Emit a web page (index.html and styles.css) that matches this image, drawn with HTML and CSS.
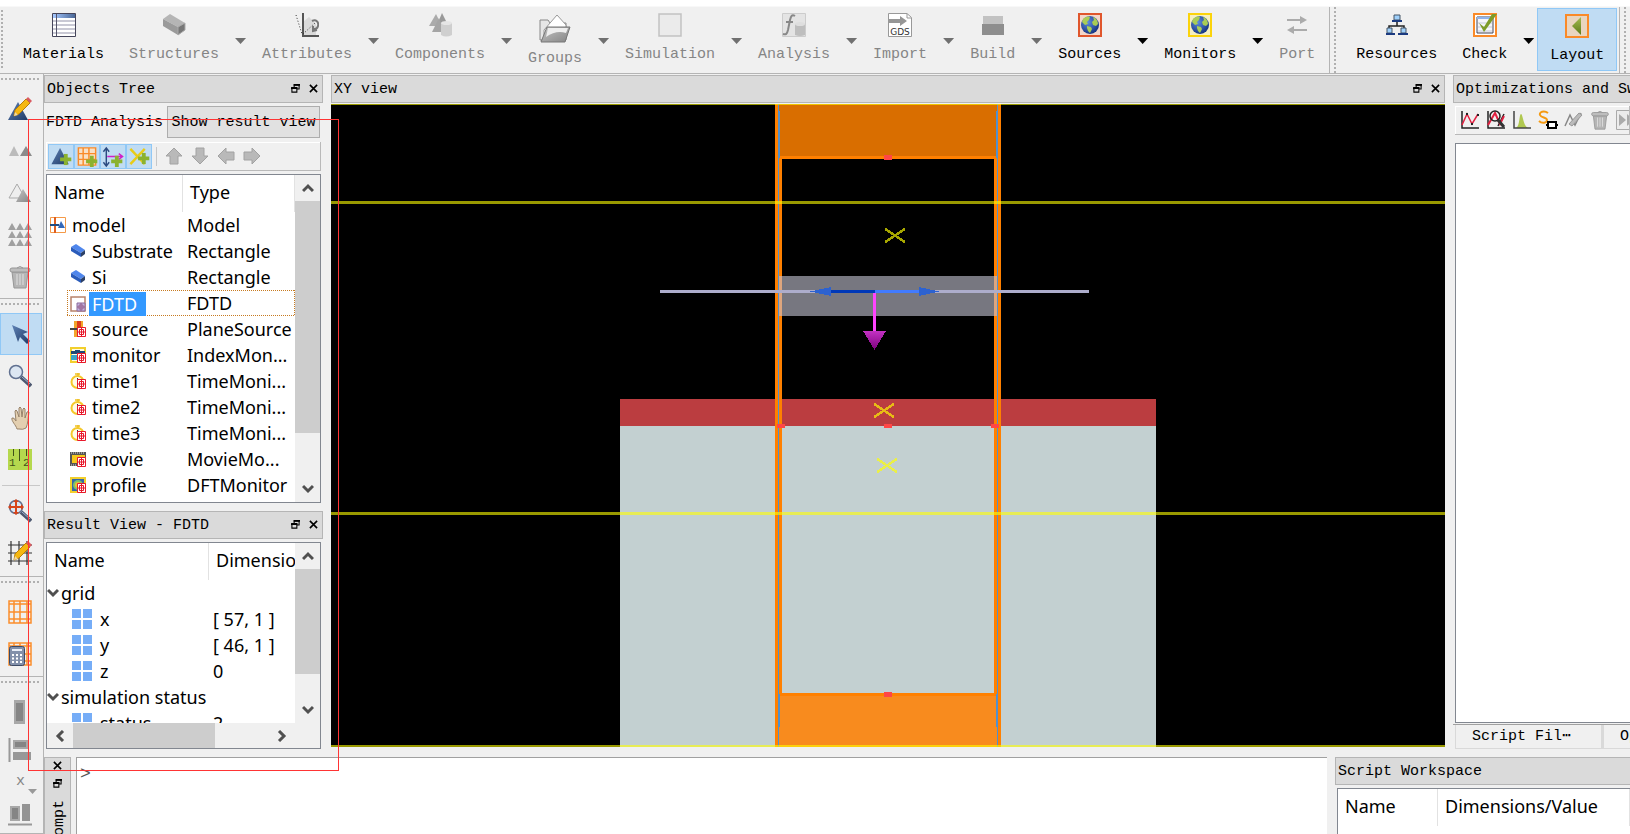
FILE: index.html
```html
<!DOCTYPE html>
<html lang="en">
<head>
<meta charset="utf-8">
<title>FDTD Layout Editor</title>
<link rel="stylesheet" href="styles.css">
</head>
<body>
<svg class="defs" aria-hidden="true">
  <defs>
    <linearGradient id="gGray" x1="0" y1="0" x2="1" y2="1"><stop offset="0" stop-color="#c4c4c4"/><stop offset="1" stop-color="#858585"/></linearGradient>
    <linearGradient id="gNavy" x1="0" y1="0" x2="1" y2="1"><stop offset="0" stop-color="#5f82b5"/><stop offset="1" stop-color="#1f3a66"/></linearGradient>
    <linearGradient id="gHead" x1="0" y1="0" x2="1" y2="0"><stop offset="0" stop-color="#a5c8ff"/><stop offset="1" stop-color="#4a6796"/></linearGradient>
    <radialGradient id="gSea" cx=".4" cy=".35" r=".7"><stop offset="0" stop-color="#5d8be0"/><stop offset="1" stop-color="#12307c"/></radialGradient>
    <linearGradient id="gGreen" x1="0" y1="0" x2="0" y2="1"><stop offset="0" stop-color="#a4bb50"/><stop offset="1" stop-color="#5d7a18"/></linearGradient>
    <linearGradient id="gMag" x1="0" y1="0" x2="0" y2="1"><stop offset="0" stop-color="#c332c3"/><stop offset="1" stop-color="#7d007d"/></linearGradient>
  </defs>
  <symbol id="globe" viewBox="0 0 24 24"><circle cx="12" cy="12" r="9" fill="url(#gSea)"/><path d="M5 6c2-2 5-3 7-2l-1 3-2 2 1 2-3 1-3-3zM9 13l4 1 1 2-2 4-2-2-1-3zM15 4c3 1 5 4 5 7l-2 2-3-1-1-3 2-2z" fill="#a9cc55"/></symbol>
  <symbol id="restore" viewBox="0 0 10 10"><path d="M3.5 3.500V1h5.500v4.500H6.500M1 4h5.500v5H1z" fill="none" stroke="#000" stroke-width="1.200"/><path d="M3 1h7M0 4.500h7" stroke="#000" stroke-width="2"/></symbol>
  <symbol id="close" viewBox="0 0 10 10"><path d="M1 1l8 8M9 1l-8 8" stroke="#000" stroke-width="1.800"/></symbol>
  <symbol id="plus" viewBox="0 0 12 12"><path d="M4 0h4v4h4v4H8v4H4V8H0V4h4z" fill="#8bb22f"/></symbol>
  <symbol id="block" viewBox="0 0 16 16"><path d="M1 4l5-3 9 6-4 3z" fill="#4f86ec"/><path d="M1 4l10 6v4L1 8z" fill="#2a5cbb"/><path d="M11 10l4-3v4l-4 3z" fill="#2b4066"/></symbol>
  <symbol id="tag" viewBox="0 0 16 16"><path d="M7.500 6.500h8v9h-8z" fill="#fff" stroke="#e8192c"/><path d="M9.500 8.500h4v5h-4zM11.500 7v8M8 11h7" fill="none" stroke="#e8192c"/></symbol>
  <symbol id="clock" viewBox="0 0 16 16"><path d="M8 0v3M5 1h5" stroke="#f0c020" stroke-width="1.500"/><circle cx="7.500" cy="9" r="6" fill="#fffbe8" stroke="#f5c82a" stroke-width="2"/><path d="M7.500 5v4" stroke="#333"/><use href="#tag" width="16" height="16"/></symbol>
  <symbol id="quad" viewBox="0 0 20 20"><path d="M0 0h9v9H0zM11 0h9v9h-9zM0 11h9v9H0zM11 11h9v9h-9z" fill="#76adf7"/></symbol>
  <symbol id="up" viewBox="0 0 12 10"><path d="M1 8l5-5 5 5" fill="none" stroke="#505050" stroke-width="3"/></symbol>
  <symbol id="down" viewBox="0 0 12 10"><path d="M1 2l5 5 5-5" fill="none" stroke="#505050" stroke-width="3"/></symbol>
  <symbol id="arrowUp" viewBox="0 0 18 18"><path d="M9 1l8 8h-4v8H5V9H1z" fill="#b9b9b9" stroke="#a2a2a2"/></symbol>
  <symbol id="trash" viewBox="0 0 24 24"><path d="M4 7h16l-2 16H6z" fill="#b5b5b5" stroke="#969696"/><path d="M9 9v11M12 9v11M15 9v11" stroke="#e0e0e0"/><rect x="2" y="3" width="20" height="4" rx="2" fill="#bdbdbd" stroke="#969696"/><path d="M9 3q3-3 6 0" fill="none" stroke="#969696"/></symbol>
  <symbol id="pencil" viewBox="0 0 24 24"><path d="M7 13L18 2l4 4-11 11-5 2z" fill="#f5b710" stroke="#b87d08"/><path d="M18 2l2-2 4 4-2 2z" fill="#d95b61"/><path d="M6 19l1-4 3 3z" fill="#eed9a5"/></symbol>
  <symbol id="glass" viewBox="0 0 24 24"><path d="M13 13l10 9" stroke="#4d5870" stroke-width="4"/><path d="M14 13l8 7" stroke="#9db2cf"/><circle cx="8" cy="8" r="6.500" fill="#dce6f2" stroke="#607090" stroke-width="1.500"/></symbol>
  <symbol id="mesh" viewBox="0 0 24 24"><path d="M1 1h22v22H1zM6 1v22M12 1v22M19 1v22M1 4h22M1 12h22M1 19h22" fill="none" stroke="#fa8d2b" stroke-width="1.500"/></symbol>
</svg>

<div class="menubar"><span>g</span><span>p</span></div>

<header class="toolbar">
  <i class="grip"></i>
  <div class="group">
    <button class="tool"><svg viewBox="0 0 24 24"><path d="M.5.5h23v23H.5z" fill="#fff"/><path d="M1 1h22v4H1z" fill="url(#gHead)"/><path d="M1 8h22M1 12h22M1 16h22M1 20h22" stroke="#c9c9d4" stroke-width="2"/><path d="M4.500 1v22" stroke="#55556a"/><path d="M.5.5h23v23H.5z" fill="none" stroke="#45455a"/></svg>Materials</button>
    <button class="tool off"><svg viewBox="0 0 24 24"><path d="M1 6l7-5 15 9-7 4z" fill="#b5b5b5"/><path d="M1 6l15 8v8L1 13z" fill="#9a9a9a"/><path d="M16 14l7-4v7l-7 5z" fill="#777" stroke="#aaa"/></svg>Structures</button><button class="drop off" aria-label="Structures menu"></button>
    <button class="tool off"><svg viewBox="0 0 24 24"><path d="M8 9l6-5 7 7v11H8z" fill="#dadada"/><path d="M8 0v23h16" fill="none" stroke="#555" stroke-width="2"/><path d="M1 2l6 19M8 21L20 10" stroke="#333" stroke-dasharray="1 2"/><path d="M17 8c4-2 7 1 6 5s-4 3-5 3m0-3v5l4-1" fill="none" stroke="#777" stroke-width="2"/></svg>Attributes</button><button class="drop off" aria-label="Attributes menu"></button>
    <button class="tool off"><svg viewBox="0 0 24 24"><path d="M8 1l6 12H1z" fill="#ababab"/><path d="M14 0l6 12H9z" fill="#999"/><path d="M11 5l5 14H4z" fill="#a5a5a5"/><path d="M13 10v12q5 3 11 0V10z" fill="#cfcfcf"/><ellipse cx="18.500" cy="10" rx="5.500" ry="2" fill="#e5e5e5"/></svg>Components</button><button class="drop off" aria-label="Components menu"></button>
    <button class="tool off"><svg class="big" viewBox="0 0 32 32"><path d="M1 7h8l2 3h16v17H1z" fill="#e6e6e6" stroke="#888"/><path d="M5 17L18 2l9 10v12H5z" fill="#fff" stroke="#999"/><path d="M8 14h23l-5 15H2z" fill="url(#gGray)" stroke="#777"/><path d="M9 15h20l-2 5q-10-3-20 4z" fill="#eee"/></svg>Groups</button><button class="drop off" aria-label="Groups menu"></button>
    <button class="tool off"><svg viewBox="0 0 24 24"><path d="M1 1h22v22H1z" fill="#ebebeb" stroke="#c2c2c2" stroke-width="1.500"/></svg>Simulation</button><button class="drop off" aria-label="Simulation menu"></button>
    <button class="tool off"><svg viewBox="0 0 24 24"><path d="M.5.5h23v23H.5z" fill="#e4e4e4" stroke="#ccc"/><path d="M13 3c-3-2-4 0-5 4L6 17c-1 4-2 5-5 4M4 9h7" fill="none" stroke="#888" stroke-width="2"/><path d="M13 11v11q5 2 10 0V11z" fill="#bebebe"/><ellipse cx="18" cy="11" rx="5" ry="2" fill="#dedede"/></svg>Analysis</button><button class="drop off" aria-label="Analysis menu"></button>
    <button class="tool off"><svg viewBox="0 0 24 24"><path d="M.5.5H19l4.500 4v19H.5z" fill="#fff" stroke="#999"/><path d="M19 1v4h4" fill="none" stroke="#999"/><path d="M1 6h11V3l7 5-7 5v-3H1z" fill="#969696"/><text x="12" y="22" text-anchor="middle" class="gds">GDS</text></svg>Import</button><button class="drop off" aria-label="Import menu"></button>
    <button class="tool off"><svg viewBox="0 0 24 24"><path d="M2 3h20v8H2z" fill="#c2c2c2"/><path d="M1 11h22v11H1z" fill="#8e8e8e"/></svg>Build</button><button class="drop off" aria-label="Build menu"></button>
    <button class="tool"><svg viewBox="0 0 24 24"><path d="M1 1h22v22H1z" fill="#f3d7ca" stroke="#e0562c" stroke-width="2"/><use href="#globe" width="24" height="24"/></svg>Sources</button><button class="drop" aria-label="Sources menu"></button>
    <button class="tool"><svg viewBox="0 0 24 24"><path d="M1 1h22v22H1z" fill="#f6efbf" stroke="#fbd30b" stroke-width="2"/><use href="#globe" width="24" height="24"/></svg>Monitors</button><button class="drop" aria-label="Monitors menu"></button>
    <button class="tool off"><svg viewBox="0 0 24 24"><path d="M2 6h13V3l7 4-7 4V8H2zM22 16H9v-3l-7 4 7 4v-3h13z" fill="#ababab"/></svg>Port</button>
  </div>
  <i class="grip split"></i>
  <div class="group">
    <button class="tool"><svg viewBox="0 0 24 24"><path d="M12 9v4M4 17v-4h15v4" fill="none" stroke="#222" stroke-width="1.500"/><path d="M9 2h6v5H9zM2 15h5v5H2zM16 15h5v5h-5z" fill="#9fd0fb" stroke="#456"/><path d="M7 8h10M1 21h9M13 21h10" stroke="#1b3a80" stroke-width="2"/></svg>Resources</button>
    <button class="tool"><svg viewBox="0 0 24 24"><path d="M1 1h22v22H1z" fill="#fff" stroke="#fa8a28" stroke-width="2"/><path d="M4 4h16v16H4z" fill="#f5f5fa" stroke="#445"/><path d="M4 5h16" stroke="#8fb4ec" stroke-width="2"/><path d="M5 10h14M5 14h14M5 18h14" stroke="#c5cbd8"/><path d="M6 10l5 4 8-13 5 0-13 18z" fill="#7d9c2a"/></svg>Check</button><button class="drop" aria-label="Check menu"></button>
    <button class="tool on"><svg viewBox="0 0 24 24"><path d="M1 1h22v22H1z" fill="#e9d5bf" stroke="#fa8a28" stroke-width="2"/><path d="M16 3v18L7 12z" fill="url(#gGreen)"/></svg>Layout</button>
  </div>
  <i class="grip split"></i>
</header>

<div class="body">
  <nav class="side">
    <section>
      <i class="dots"></i>
      <button aria-label="Edit"><svg viewBox="0 0 24 24"><path d="M10 5l10 18H0z" fill="url(#gNavy)"/><use href="#pencil" width="24" height="24"/></svg></button>
      <button aria-label="Duplicate"><svg viewBox="0 0 24 24"><path d="M6 7l5 10H1z" fill="#bbb"/><path d="M18 7l6 10H12z" fill="#8c8c8c"/></svg></button>
      <button aria-label="Copy"><svg viewBox="0 0 24 24"><path d="M9 3l8 14H1z" fill="#eee" stroke="#aaa"/><path d="M15 8l8 13H8z" fill="url(#gGray)"/></svg></button>
      <button aria-label="Array"><svg viewBox="0 0 24 24"><path d="M4 0l4 7H0zM12 0l4 7H8zM20 0l4 7h-8zM4 8l4 7H0zM12 8l4 7H8zM20 8l4 7h-8zM4 16l4 7H0zM12 16l4 7H8zM20 16l4 7h-8z" fill="#a0a0a0"/></svg></button>
      <button aria-label="Delete"><svg viewBox="0 0 24 24"><use href="#trash" width="24" height="24"/></svg></button>
    </section>
    <section class="pointer">
      <i class="dots"></i>
      <button class="on" aria-label="Select"><svg viewBox="0 0 24 24"><path d="M4 3l16 7-5 2 7 7-3 3-7-7-2 5z" fill="url(#gNavy)"/></svg></button>
      <button aria-label="Zoom"><svg viewBox="0 0 24 24"><use href="#glass" width="24" height="24"/></svg></button>
      <button aria-label="Pan"><svg viewBox="0 0 24 24"><path d="M9 23C8 19 3 15 4 12q2-1 4 3L7 5q1-2 2 0l2 6V2q1-2 2 0l1 9 1-8q1-2 2 0v9l2-6q2-1 2 0c-1 6-1 12-3 16q-3 2-7 1z" fill="#e3cfb0" stroke="#98836a"/></svg></button>
      <button aria-label="Ruler"><svg viewBox="0 0 24 24"><path d="M0 1h24v21H0z" fill="#b5d84e"/><path d="M5.500 1v7M11.500 1v12M18.500 1v7" stroke="#40521a"/><text x="1" y="18" class="digits">1</text><text x="15" y="18" class="digits">2</text></svg></button>
      <hr>
      <button aria-label="Zoom extent"><svg viewBox="0 0 24 24"><use href="#glass" width="24" height="24"/><path d="M8 0l3 3H9v4h4V5l3 3-3 3V9H9v4h2l-3 3-3-3h2V9H3v2L0 8l3-3v2h4V3H5z" fill="#d8451a"/></svg></button>
      <button aria-label="Edit grid"><svg viewBox="0 0 24 24"><path d="M3 0v24M11 0v24M19 0v24M0 4h24M0 12h24M0 20h24" stroke="#333" stroke-width="1.200"/><use href="#pencil" width="24" height="24"/></svg></button>
    </section>
    <section class="meshing">
      <i class="dots"></i>
      <button aria-label="Mesh"><svg viewBox="0 0 24 24"><use href="#mesh" width="24" height="24"/></svg></button>
      <button aria-label="Compute mesh"><svg viewBox="0 0 24 24"><use href="#mesh" width="24" height="24"/><rect x="1.500" y="4.500" width="15" height="19" rx="2" fill="#8290aa" stroke="#3c4a66"/><path d="M4 8h10" stroke="#e8eef8" stroke-width="2"/><path d="M4 13h10M4 16.500h10M4 20h10" stroke="#fff" stroke-width="2" stroke-dasharray="2 2"/></svg></button>
    </section>
    <section class="tight">
      <i class="dots"></i>
      <button aria-label="Align"><svg viewBox="0 0 24 24"><path d="M6 0h11v24H6z" fill="#a8a8a8"/><path d="M8 3h7v18H8z" fill="#858585"/></svg></button>
      <button aria-label="Align left"><svg viewBox="0 0 24 24"><path d="M1.500 0v24" stroke="#999" stroke-width="2"/><path d="M5 2h15v9H5z" fill="#a8a8a8"/><path d="M7 4h11v5H7z" fill="#858585"/><path d="M5 14h18v8H5z" fill="#989898"/></svg></button>
      <button class="axis">x</button>
      <button aria-label="Align bottom"><svg viewBox="0 0 24 24"><path d="M2 4h10v15H2z" fill="#a8a8a8"/><path d="M4 6h6v11H4z" fill="#858585"/><path d="M14 2h8v17h-8z" fill="#949494"/><path d="M0 22.500h24" stroke="#999" stroke-width="2"/></svg></button>
    </section>
  </nav>

  <div class="work">
    <main class="upper">
      <div class="dock left">
        <section class="panel objects">
          <h2 class="bar">Objects Tree<span class="ctl"><button aria-label="Float"><svg><use href="#restore"/></svg></button><button aria-label="Close"><svg><use href="#close"/></svg></button></span></h2>
          <div class="analysis"><span>FDTD Analysis</span><button>Show result view</button></div>
          <div class="mini">
            <button class="on" aria-label="Show structures"><svg viewBox="0 0 24 24"><path d="M11 3l9 17H2z" fill="url(#gNavy)"/><use href="#plus" x="11" y="9" width="12" height="12"/></svg></button><button class="on" aria-label="Show simulation"><svg viewBox="0 0 24 24"><path d="M3 3h18v18H3zM8 3v18M14 3v18M3 9h18M3 15h18" fill="#f8e0c6" stroke="#fa8a28" stroke-width="1.500"/><use href="#plus" x="11" y="11" width="12" height="12"/></svg></button><button class="on" aria-label="Show sources"><svg viewBox="0 0 24 24"><path d="M5 4v17M2 7l3-4 3 4M2 18l3 4 3-4" fill="none" stroke="#2b4a80" stroke-width="1.500"/><path d="M6 12h16m-4-3l4 3-4 3" fill="none" stroke="#d020c8" stroke-width="1.500"/><use href="#plus" x="10" y="11" width="12" height="12"/></svg></button><button class="on" aria-label="Show monitors"><svg viewBox="0 0 24 24"><path d="M3 4l15 16M3 20L18 4" stroke="#e8cc18" stroke-width="2.500"/><use href="#plus" x="11" y="8" width="12" height="12"/></svg></button><i></i><button aria-label="Up"><svg viewBox="0 0 18 18"><use href="#arrowUp"/></svg></button><button aria-label="Down"><svg viewBox="0 0 18 18"><g transform="rotate(180 9 9)"><use href="#arrowUp"/></g></svg></button><button aria-label="Left"><svg viewBox="0 0 18 18"><g transform="rotate(-90 9 9)"><use href="#arrowUp"/></g></svg></button><button aria-label="Right"><svg viewBox="0 0 18 18"><g transform="rotate(90 9 9)"><use href="#arrowUp"/></g></svg></button>
          </div>
          <div class="frame">
            <div class="view">
              <table class="tree">
                <colgroup><col class="c-name"><col></colgroup>
                <thead><tr><th>Name</th><th>Type</th></tr></thead>
                <tbody>
                  <tr><td><svg viewBox="0 0 16 16"><path d="M.5.5h15v15H.5z" fill="#fff" stroke="#f59a48"/><path d="M5 0v16" stroke="#e06020" stroke-width="2"/><path d="M0 8h9" stroke="#234c80" stroke-width="2"/><path d="M11 4l4 7H8z" fill="#3468b8"/></svg><span>model</span></td><td>Model</td></tr>
                  <tr class="kid"><td><svg><use href="#block"/></svg><span>Substrate</span></td><td>Rectangle</td></tr>
                  <tr class="kid"><td><svg><use href="#block"/></svg><span>Si</span></td><td>Rectangle</td></tr>
                  <tr class="kid picked"><td><svg viewBox="0 0 16 16"><path d="M1 1h14v14H1z" fill="#fff" stroke="#b8836a" stroke-width="1.500"/><path d="M7 7h8v8H7z" fill="#c5b5df" stroke="#8a6b9a"/><path d="M9 9h4v4H9zM11 7v8M7 11h8" fill="none" stroke="#8a4b7a" stroke-width=".7"/></svg><span>FDTD</span></td><td>FDTD</td></tr>
                  <tr class="kid"><td><svg viewBox="0 0 16 16"><path d="M4 0h9v16H4z" fill="#f2a52c"/><path d="M7 0h4v16H7z" fill="#dd3c1c"/><path d="M0 8h9" stroke="#444" stroke-width="2"/><use href="#tag" width="16" height="16"/></svg><span>source</span></td><td>PlaneSource</td></tr>
                  <tr class="kid"><td><svg viewBox="0 0 16 16"><path d="M1 1h14v14H1z" fill="#fffbe0" stroke="#f2cf2c" stroke-width="2"/><path d="M1 4h14v3H1z" fill="#1d4876"/><path d="M1 8h14v5H1z" fill="#38a4c8"/><path d="M5 3h5v3H5z" fill="#1d4876"/><use href="#tag" width="16" height="16"/></svg><span>monitor</span></td><td>IndexMon...</td></tr>
                  <tr class="kid"><td><svg><use href="#clock"/></svg><span>time1</span></td><td>TimeMoni...</td></tr>
                  <tr class="kid"><td><svg><use href="#clock"/></svg><span>time2</span></td><td>TimeMoni...</td></tr>
                  <tr class="kid"><td><svg><use href="#clock"/></svg><span>time3</span></td><td>TimeMoni...</td></tr>
                  <tr class="kid"><td><svg viewBox="0 0 16 16"><path d="M0 1h16v14H0z" fill="#555"/><path d="M1 2h14M1 14h14" stroke="#ddd" stroke-dasharray="1 1"/><path d="M2 4h13v8H2z" fill="#f5c91c"/><use href="#tag" width="16" height="16"/></svg><span>movie</span></td><td>MovieMo...</td></tr>
                  <tr class="kid"><td><svg viewBox="0 0 16 16"><path d="M1 1h14v14H1z" fill="#3566a8" stroke="#f2cf2c" stroke-width="2"/><circle cx="8" cy="8" r="5" fill="#7cc36a"/><circle cx="8" cy="8" r="3" fill="#f0bc30"/><use href="#tag" width="16" height="16"/></svg><span>profile</span></td><td>DFTMonitor</td></tr>
                </tbody>
              </table>
            </div>
            <div class="vscroll"><button aria-label="Scroll up"><svg><use href="#up"/></svg></button><i class="long"></i><button aria-label="Scroll down"><svg><use href="#down"/></svg></button></div>
          </div>
        </section>
        <section class="panel results">
          <h2 class="bar">Result View - FDTD<span class="ctl"><button aria-label="Float"><svg><use href="#restore"/></svg></button><button aria-label="Close"><svg><use href="#close"/></svg></button></span></h2>
          <div class="frame">
            <div class="stack">
              <div class="view">
                <table class="tree result">
                  <colgroup><col class="c-name"><col></colgroup>
                  <thead><tr><th>Name</th><th>Dimensions</th></tr></thead>
                  <tbody>
                    <tr class="node"><td colspan="2"><svg><use href="#down"/></svg><span>grid</span></td></tr>
                    <tr class="leaf"><td><svg><use href="#quad"/></svg><span>x</span></td><td>[ 57, 1 ]</td></tr>
                    <tr class="leaf"><td><svg><use href="#quad"/></svg><span>y</span></td><td>[ 46, 1 ]</td></tr>
                    <tr class="leaf"><td><svg><use href="#quad"/></svg><span>z</span></td><td>0</td></tr>
                    <tr class="node"><td colspan="2"><svg><use href="#down"/></svg><span>simulation status</span></td></tr>
                    <tr class="leaf"><td><svg><use href="#quad"/></svg><span>status</span></td><td>2</td></tr>
                  </tbody>
                </table>
              </div>
              <div class="hscroll"><button aria-label="Scroll left"><svg class="quarter"><use href="#down"/></svg></button><i></i><button aria-label="Scroll right"><svg class="quarter"><use href="#up"/></svg></button></div>
            </div>
            <div class="vscroll short"><button aria-label="Scroll up"><svg><use href="#up"/></svg></button><i></i><button aria-label="Scroll down"><svg><use href="#down"/></svg></button></div>
          </div>
        </section>
      </div>

      <section class="panel xy">
        <h2 class="bar">XY view<span class="ctl"><button aria-label="Float"><svg><use href="#restore"/></svg></button><button aria-label="Close"><svg><use href="#close"/></svg></button></span></h2>
        <svg class="scene" viewBox="331 104 1114 643" preserveAspectRatio="xMidYMid slice" shape-rendering="crispEdges">
          <path d="M331 104h1114v643H331z" fill="#000"/>
          <path d="M620 426h536v321H620z" fill="#c3d0d1"/>
          <path d="M620 399h536v27H620z" fill="#bb3d40"/>
          <path d="M779 104h218v53H779z" fill="#d96e00"/>
          <path d="M779 695h218v52H779z" fill="#f88b1e"/>
          <path d="M775 104h3v643h-3zM998 104h3v643h-3zM779 157h3v538h-3zM994 157h3v538h-3zM779 156h218v3H779zM779 693h218v3H779z" fill="#ff8000"/>
          <path d="M778 104h1v643h-1zM997 104h1v643h-1zM779 111h1v47h-1zM996 111h1v47h-1zM779 694h1v33h-1zM996 694h1v33h-1z" fill="#5290cc"/>
          <path d="M779 276h218v40H779z" fill="#777780"/>
          <path d="M779 276h3v40h-3zM994 276h3v40h-3z" fill="#dea67e"/>
          <path d="M660 290h429v3H660z" fill="#adadcc"/>
          <path d="M831 290h44v3h-44z" fill="#0038b8"/><path d="M875 290h44v3h-44z" fill="#427bff"/>
          <path d="M810 291.500l21-4.500v9zM939 291.500l-20-4.500v9z" fill="#2d62d0"/>
          <path d="M873 293h3v38h-3z" fill="#ff44ff"/><path d="M863 331h23l-11.500 19z" fill="url(#gMag)"/>
          <g fill="#ff0" fill-opacity=".6"><path d="M331 104h1114v1H331zM331 201h1114v3H331zM331 512h1114v3H331zM331 745h1114v2H331z"/></g>
          <path d="M885 229l20 13m0-13l-20 13M874 404l20 13m0-13l-20 13M877 459l20 13m0-13l-20 13" fill="none" stroke="#ff0" stroke-opacity=".65" stroke-width="2.500"/>
          <path d="M884 155h8v5h-8zM777 424h8v4h-8zM884 424h8v4h-8zM991 424h8v4h-8zM884 692h8v5h-8z" fill="#ff4646"/>
        </svg>
      </section>

      <section class="panel opt">
        <h2 class="bar">Optimizations and Sweeps</h2>
        <div class="mini plain">
          <button aria-label="New sweep"><svg viewBox="0 0 20 20"><path d="M2 1v17h17" fill="none" stroke="#222" stroke-width="1.500"/><path d="M2 15L7 4l5 10 6-10" fill="none" stroke="#e02040" stroke-width="1.500"/><path d="M6 3h2v2H6zM11 13h2v2h-2zM17 4h2v2h-2z" fill="#222"/></svg></button>
          <button aria-label="New optimization"><svg viewBox="0 0 20 20"><path d="M2 1v17h17M18 4l-6 12" fill="none" stroke="#222" stroke-width="1.500"/><path d="M2 15L9 3l5 11 4-8" fill="none" stroke="#e02040" stroke-width="2"/><circle cx="9" cy="6" r="5" fill="none" stroke="#222" stroke-width="1.500"/><path d="M12 10l6 7" stroke="#333" stroke-width="3"/></svg></button>
          <button aria-label="New yield analysis"><svg viewBox="0 0 20 20"><path d="M4 18c4-2 3-14 5-14s2 12 7 14z" fill="#b0c850"/><path d="M2 1v17h17" fill="none" stroke="#444" stroke-width="1.500"/></svg></button>
          <button aria-label="New S-parameter sweep"><svg viewBox="0 0 20 20"><path d="M10 3c-4-3-9-1-8 2s7 2 7 5-5 4-8 1" fill="none" stroke="#f59a12" stroke-width="2"/><path d="M10 12h8v6h-8zM8 15h2M18 15h2" fill="#fff" stroke="#000" stroke-width="2"/></svg></button>
          <button aria-label="Edit sweep"><svg viewBox="0 0 20 20"><path d="M1 16L6 5l5 10 6-12" fill="none" stroke="#888" stroke-width="1.500"/><path d="M5 14L15 3l3 2L8 16z" fill="#bbb" stroke="#999"/></svg></button>
          <button aria-label="Delete sweep"><svg viewBox="0 0 24 24"><use href="#trash" width="24" height="24"/></svg></button>
          <button aria-label="Run sweep"><svg viewBox="0 0 20 20"><path d="M.5.5h19v19H.5z" fill="#ececec" stroke="#aaa"/><path d="M3 4l7 6-7 6zM11 4l7 6-7 6z" fill="#aaa"/></svg></button>
        </div>
        <div class="frame"></div>
        <div class="tabs"><button>Script Fil⋯</button><button>Optimizations</button></div>
      </section>
    </main>

    <footer class="lower">
      <section class="prompt">
        <div class="vbar"><button aria-label="Close"><svg><use href="#close"/></svg></button><button aria-label="Float"><svg><use href="#restore"/></svg></button><span>Script Prompt</span></div>
        <textarea aria-label="Script Prompt">&gt;</textarea>
      </section>
      <section class="panel space">
        <h2 class="bar">Script Workspace</h2>
        <div class="frame"><div class="view"><table class="tree"><colgroup><col class="c-name"><col></colgroup><thead><tr><th>Name</th><th>Dimensions/Value</th></tr></thead></table></div></div>
      </section>
    </footer>
  </div>
  <div class="marquee"></div>
</div>
</body>
</html>
```
FILE: styles.css
```css
* { box-sizing: border-box; }

html, body { height: 100%; overflow: hidden; }

body {
  margin: 0;
  display: flex;
  flex-direction: column;
  background: #f0f0f0;
  color: #000;
  font: 15px/20px "Liberation Mono", monospace;
}

button {
  border: 0;
  padding: 0;
  margin: 0;
  background: none;
  color: inherit;
  font: inherit;
}

svg { display: block; flex: none; }
.defs { position: absolute; width: 0; height: 0; }
.gds { font: 9px "DejaVu Sans", sans-serif; fill: #333; }
.digits { font: 11px "Liberation Mono", monospace; fill: #40521a; }

/* Menu strip and main toolbar */
.menubar {
  flex: none;
  height: 6px;
  display: flex;
  align-items: flex-end;
  gap: 156px;
  padding: 0 0 4px 206px;
  overflow: hidden;
  background: #fff;
  line-height: 17px;
}

.toolbar {
  flex: none;
  height: 68px;
  display: flex;
  border-top: 1px solid #f8f8f8;
  border-bottom: 1px solid #b4b4b4;
  overflow: hidden;
}

.grip {
  flex: none;
  width: 10px;
  margin: 3px 0 4px;
  background: repeating-linear-gradient(#b0b0b0 0 2px, transparent 2px 4px) 1px 0 / 2px 100% no-repeat;
}

.grip.split {
  width: 14px;
  margin: 0 0 0 2px;
  border-left: 1px solid #b4b4b4;
  background-position: 4px 0;
}

.group { display: flex; }

.tool {
  display: flex;
  flex-direction: column;
  align-items: center;
  padding: 6px 12px 0 13px;
  gap: 8px;
  white-space: nowrap;
}

.tool svg { width: 24px; height: 24px; }
.tool svg.big { width: 32px; height: 32px; margin-bottom: -4px; }
.tool.off { color: #858585; }

.tool.on {
  height: 63px;
  margin-top: 1px;
  background: #c0dcf3;
  border: 1px solid #90c8f6;
  padding: 5px 12px 0;
}

.drop {
  width: 18px;
  display: flex;
  padding: 31px 3px 0 4px;
}

.drop::before {
  content: "";
  width: 11px;
  height: 6px;
  background: #000;
  clip-path: polygon(0 0, 100% 0, 50% 100%);
}

.drop.off::before { background: #707070; }

/* Work area */
.body {
  position: relative;
  flex: 1;
  min-height: 0;
  display: flex;
}

.side {
  flex: none;
  width: 44px;
  border-right: 1px solid #b4b4b4;
  overflow: hidden;
}

.side section {
  display: flex;
  flex-direction: column;
  padding: 4px 1px 0 0;
  border-bottom: 1px solid #b4b4b4;
}

.side .pointer { padding-bottom: 2px; }
.side .meshing { padding-bottom: 1px; }

.dots {
  height: 2px;
  margin: 0 2px 8px 1px;
  background: repeating-linear-gradient(90deg, #b0b0b0 0 2px, transparent 2px 4px);
}

.tight .dots { margin-bottom: 10px; }

.side button {
  width: 42px;
  height: 42px;
  display: grid;
  place-items: center start;
  padding-left: 8px;
}

.side svg { width: 24px; height: 24px; }
.side .on { background: #c0dcf3; border: 1px solid #90c8f6; padding-left: 7px; }
.side hr { width: 38px; margin: 4px 2px 4px; border: 0; border-top: 1px solid #c8c8c8; }
.side .tight button { height: 38px; }

.side .tight .axis {
  height: 26px;
  display: flex;
  align-items: flex-end;
  color: #858585;
  line-height: 26px;
  padding-left: 16px;
}

.axis::after {
  content: "";
  flex: none;
  width: 9px;
  height: 5px;
  margin: 0 0 1px 3px;
  background: #999;
  clip-path: polygon(0 0, 100% 0, 50% 100%);
}

.work {
  flex: 1;
  min-width: 0;
  display: flex;
  flex-direction: column;
  gap: 8px;
  padding-top: 1px;
}

.upper { flex: 1; min-height: 0; display: flex; gap: 8px; }

.panel { display: flex; flex-direction: column; min-height: 0; min-width: 0; }

.bar {
  flex: none;
  height: 28px;
  margin: 0;
  padding: 2px 4px 0 2px;
  display: flex;
  align-items: center;
  background: #dadada;
  border: 1px solid #b5b5b5;
  font: inherit;
  white-space: nowrap;
  overflow: hidden;
}

.ctl { margin: -4px 0 0 auto; display: flex; gap: 9px; }
.ctl svg { width: 9px; height: 9px; }

.dock { flex: none; width: 279px; display: flex; flex-direction: column; gap: 8px; }
.objects { flex: 428 1 0; }
.results { flex: 238 1 0; }

.analysis { flex: none; display: flex; align-items: center; height: 32px; margin: 3px 3px 4px 2px; }
.analysis span { padding-top: 2px; }

.analysis button {
  flex: 1;
  height: 32px;
  margin-left: 4px;
  padding-top: 2px;
  background: #e1e1e1;
  border: 1px solid #adadad;
  white-space: nowrap;
}

.mini {
  flex: none;
  display: flex;
  align-items: center;
  height: 29px;
  margin: 0 2px 3px;
  padding-left: 2px;
  border: solid #b9b9b9;
  border-width: 0 1px 1px 0;
  box-shadow: inset 1px 1px #fff;
}

.mini button { flex: none; width: 26px; height: 25px; display: grid; place-items: center; }
.mini svg { width: 18px; height: 18px; }
.mini .on { background: #c0dcf3; border: 1px solid #90c8f6; }
.mini .on svg { width: 24px; height: 23px; }
.mini i { height: 19px; margin: 0 4px; border-left: 1px solid #c8c8c8; }
.mini.plain { margin: 3px 0 8px 2px; overflow: hidden; }
.mini.plain svg { width: 20px; height: 20px; }

.frame {
  flex: 1;
  min-height: 0;
  display: flex;
  margin: 0 2px;
  background: #fff;
  border: 1px solid #828790;
}

.results .frame { margin-top: 3px; }
.view { flex: 1; min-width: 0; min-height: 0; overflow: hidden; }
.stack { flex: 1; min-width: 0; display: flex; flex-direction: column; }

.tree {
  width: 100%;
  table-layout: fixed;
  border-collapse: separate;
  border-spacing: 0;
  font: 18px/26px "Noto Sans", sans-serif;
  white-space: nowrap;
}

.c-name { width: 136px; }
.result .c-name { width: 162px; }
.space .c-name { width: 100px; }

.tree th {
  height: 37px;
  padding: 0 0 3px 7px;
  border-right: 1px solid #e2e2e2;
  font-weight: normal;
  text-align: left;
  overflow: hidden;
}

.result th:last-child { border-right: 0; }
.tree td { height: 26px; padding: 0 0 0 4px; overflow: hidden; }
.tree td:first-child { padding-left: 3px; }
.tree td svg { float: left; width: 16px; height: 16px; margin: 5px 4px 0 0; }
.tree td span { display: block; width: max-content; padding: 0 3px; }
.tree svg + span { margin-left: 19px; }
.tree .kid td:first-child { padding-left: 23px; }
.tree .kid svg { margin-right: 3px; }
.tree .kid svg + span { float: left; margin-left: 0; padding-right: 9px; }

/* Dotted focus frame around the selected row */
.picked {
  --dots: repeating-linear-gradient(90deg, #c77a20 0 1px, transparent 1px 2px);
  --dashes: repeating-linear-gradient(#c77a20 0 1px, transparent 1px 2px);
}

.picked td:first-child {
  background: var(--dots) 20px 0 / 100% 1px no-repeat, var(--dots) 20px 100% / 100% 1px no-repeat, var(--dashes) 20px 0 / 1px 100% no-repeat;
}

.picked td:last-child {
  background: var(--dots) 0 0 / 100% 1px no-repeat, var(--dots) 0 100% / 100% 1px no-repeat, var(--dashes) 100% 0 / 1px 100% no-repeat;
}

.tree .picked span { height: 24px; margin-top: 1px; line-height: 24px; background: #3399ff; color: #fff; }

.tree .node td:first-child { padding-left: 0; }
.tree .node svg { width: 12px; height: 10px; margin: 8px 0 0; }
.tree .node span { float: left; margin-left: 0; padding: 0 0 0 2px; }
.tree .leaf td:first-child { padding-left: 25px; }
.tree .leaf svg { width: 20px; height: 20px; margin: 3px 0 0; }
.tree .leaf svg + span { float: left; margin-left: 0; padding: 0 0 0 8px; }

.vscroll {
  flex: none;
  width: 25px;
  display: flex;
  flex-direction: column;
  background: #f0f0f0;
}

.vscroll button { flex: none; height: 26px; display: grid; place-items: center; }
.vscroll svg { width: 12px; height: 10px; }
.vscroll i { background: #cdcdcd; }
.vscroll i + button { margin-top: auto; }
.vscroll .long { flex: 0 1 232px; }
.vscroll.short { padding-bottom: 25px; }
.vscroll.short i { flex: 0 1 105px; }

.hscroll { flex: none; height: 25px; display: flex; align-items: center; background: #f0f0f0; }
.hscroll button { width: 26px; display: grid; place-items: center; }
.hscroll i { width: 142px; height: 25px; background: #cdcdcd; }
.hscroll i + button { margin-left: auto; }
.quarter { width: 12px; height: 10px; transform: rotate(90deg); }

.xy { flex: 1; gap: 1px; padding-bottom: 2px; }
.scene { flex: 1; width: 100%; min-height: 0; }

.opt { flex: none; width: 177px; overflow: hidden; }
.opt .frame { margin-right: 0; border-right: 0; }
.opt .bar, .space .bar { border-right: 0; }
.tabs { flex: none; display: flex; height: 25px; margin-top: 1px; padding-left: 2px; border-top: 1px solid #a0a0a0; }
.tabs button { flex: none; width: 148px; padding-left: 16px; border: solid #d9d9d9; border-width: 0 2px 1px 1px; text-align: left; }

.lower { flex: none; height: 77px; display: flex; gap: 8px; }
.prompt { flex: 1; display: flex; gap: 5px; min-width: 0; }

.vbar {
  flex: none;
  width: 27px;
  display: flex;
  flex-direction: column;
  align-items: center;
  gap: 9px;
  padding-top: 3px;
  background: #dadada;
  border: 1px solid #b5b5b5;
  border-bottom: 0;
  overflow: hidden;
}

.vbar svg { width: 9px; height: 9px; }
.vbar span { flex: none; writing-mode: vertical-rl; transform: rotate(180deg); white-space: nowrap; margin: 3px 0 0 4px; }

.prompt textarea {
  flex: 1;
  min-width: 0;
  margin: 0;
  padding: 6px 3px;
  border: 1px solid #a0a0a0;
  border-width: 1px 0 0 1px;
  background: #fff;
  color: #555;
  font: 18px/20px "Liberation Mono", monospace;
  resize: none;
  overflow: hidden;
  outline: 0;
}

.space { flex: none; width: 295px; }
.space .frame { margin: 3px 0 0 2px; border-right: 0; border-bottom: 0; }

/* Highlight rectangle lying over the docked panels */
.marquee {
  position: absolute;
  left: 28px;
  top: 45px;
  width: 311px;
  height: 652px;
  border: 1px solid #ff3434;
  pointer-events: none;
}
```
